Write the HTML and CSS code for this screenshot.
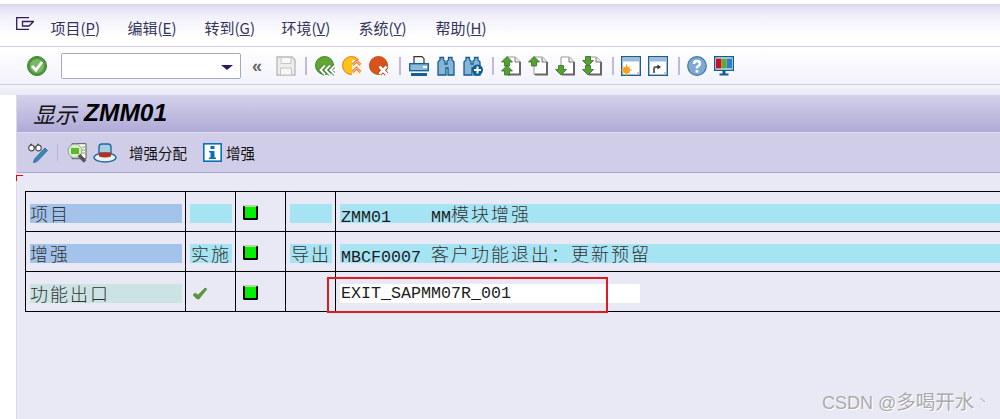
FILE: index.html
```html
<!DOCTYPE html>
<html lang="zh">
<head>
<meta charset="utf-8">
<title>显示 ZMM01</title>
<link rel="stylesheet" href="styles.css">
</head>
<body>
<svg class="defs" width="0" height="0">
  <defs>
    <g id="page"><path d="M6 1h8.500L19 5.500V18.500H6z" fill="#fff" stroke="#999" stroke-width="1"/><path d="M19 6v12.500H7" fill="none" stroke="#666" stroke-width="2"/><path d="M14 1.500v4.500h5" fill="#eee" stroke="#777" stroke-width="1"/></g>
    <path id="up" d="M6 .5l5.500 5.500H8.500v4h-5V6H.5z" fill="#55a02f" stroke="#2f6f2a" stroke-width=".8"/>
    <path id="down" d="M3.500 .5h5v4h3L6 10 .5 4.500h3z" fill="#55a02f" stroke="#2f6f2a" stroke-width=".8"/>
    <g id="bino"><path d="M3 1.500h3.500v2.500l1.500 1v3h2V5l1.500-1V1.500H15V4l2 2v13h-6v-7H9v7H1V6l2-2z" fill="#8ab4d6" stroke="#0e5f92" stroke-width="1.300"/></g>
    <g id="win"><rect x=".7" y=".7" width="18.600" height="18.600" fill="#fff" stroke="#1b5f8c" stroke-width="1.400"/><rect x="1.500" y="1.500" width="17" height="4" fill="#9dbbdd"/><rect x="16" y="16" width="2" height="2" fill="#ccc"/></g>
  </defs>
</svg>
<header class="menubar">
  <svg class="menu-icon" width="18" height="14" viewBox="0 0 18 14"><path d="M13 .7H.7V12.300H13M6.500 4.500H17.500L13 9H6.500z" fill="none" stroke="#2b1c66" stroke-width="1.300"/></svg>
  <nav class="menus">
    <span>项目(<u>P</u>)</span><span>编辑(<u>E</u>)</span><span>转到(<u>G</u>)</span><span>环境(<u>V</u>)</span><span>系统(<u>Y</u>)</span><span>帮助(<u>H</u>)</span>
  </nav>
</header>
<div class="toolbar">
  <svg class="ic ok" width="20" height="20" viewBox="0 0 20 20"><circle cx="10" cy="10" r="9.500" fill="#4c9a3c" stroke="#3b7d30"/><circle cx="10" cy="10" r="7" fill="#7bb865"/><path d="M5 10l4 4 6-8" fill="none" stroke="#fff" stroke-width="2.800"/></svg>
  <div class="combo"><span class="arrow"></span></div>
  <span class="chev">«</span>
  <svg class="ic save" width="20" height="20" viewBox="0 0 20 20"><path d="M1 1h15l3 3v15H1z" fill="#eee" stroke="#bbb" stroke-width="1.400"/><path d="M5 1.500h10v6H5zM4.500 12h11v7h-11z" fill="#f8f8f8" stroke="#c4c4c4"/></svg>
  <i class="sep s-a"></i>
  <svg class="ic back" width="20" height="20" viewBox="0 0 20 20"><circle cx="9.500" cy="9.500" r="9" fill="#5fa632" stroke="#3e7f34"/><path d="M10 9.500l-4.500 4.500 4.500 4.500M15 9.500l-4.500 4.500 4.500 4.500M20 9.500l-4.500 4.500 4.500 4.500" fill="none" stroke="#3e7f34" stroke-width="3.600"/><path d="M10 9.500l-4.500 4.500 4.500 4.500M15 9.500l-4.500 4.500 4.500 4.500M20 9.500l-4.500 4.500 4.500 4.500" fill="none" stroke="#fff" stroke-width="2"/></svg>
  <svg class="ic" width="20" height="20" viewBox="0 0 20 20"><circle cx="9.500" cy="9.500" r="9" fill="#fcc419" stroke="#e8741e"/><path d="M10 4h10v16H10z" fill="#fff3e6"/><path d="M10.500 9l4-4 4 4M10.500 16l4-4 4 4" fill="none" stroke="#e8741e" stroke-width="2.600"/><path d="M10.500 9l4-4 4 4M10.500 16l4-4 4 4" fill="none" stroke="#fff" stroke-width=".8"/></svg>
  <svg class="ic" width="20" height="20" viewBox="0 0 20 20"><circle cx="9.500" cy="9.500" r="9" fill="#d9541a" stroke="#c04a16"/><path d="M10.500 10.500l7 7.500m0-7.500l-7 7.500" stroke="#b03a14" stroke-width="4.400"/><path d="M10.500 10.500l7 7.500m0-7.500l-7 7.500" stroke="#fff" stroke-width="2.800"/></svg>
  <i class="sep s-b"></i>
  <svg class="ic print" width="20" height="20" viewBox="0 0 20 20"><path d="M5 .7h8l2 2v5H5z" fill="#fff" stroke="#333" stroke-width="1.200"/><rect x=".7" y="7.700" width="18.600" height="7" fill="#8eb9d9" stroke="#0e5f92" stroke-width="1.300"/><rect x="14" y="10" width="4" height="2" fill="#fff"/><rect x="2" y="17" width="16" height="3" fill="#0e5f92"/></svg>
  <svg class="ic" width="20" height="20" viewBox="0 0 20 20"><use href="#bino" x="1"/></svg>
  <svg class="ic" width="20" height="20" viewBox="0 0 20 20"><use href="#bino"/><circle cx="14.500" cy="14" r="5.500" fill="#0e5f92"/><path d="M14.500 10.500v7M11 14h7" stroke="#fff" stroke-width="2"/></svg>
  <i class="sep s-c"></i>
  <svg class="ic" width="20" height="20" viewBox="0 0 20 20"><use href="#page"/><use href="#up" x="0" y="0"/><use href="#up" x="0" y="9"/></svg>
  <svg class="ic" width="20" height="20" viewBox="0 0 20 20"><use href="#page"/><use href="#up" x="0" y="0"/></svg>
  <svg class="ic" width="20" height="20" viewBox="0 0 20 20"><use href="#page"/><use href="#down" x="0" y="9"/></svg>
  <svg class="ic" width="20" height="20" viewBox="0 0 20 20"><use href="#page"/><use href="#down" x="0" y="0"/><use href="#down" x="0" y="9"/></svg>
  <i class="sep s-d"></i>
  <svg class="ic" width="20" height="20" viewBox="0 0 20 20"><use href="#win"/><circle cx="5.500" cy="14" r="3.500" fill="#f9a01b"/><path d="M5.500 8.500v11M0 14h11M2 10.500l7 7m0-7l-7 7" stroke="#f9a01b"/></svg>
  <svg class="ic" width="20" height="20" viewBox="0 0 20 20"><use href="#win"/><path d="M6 17v-4q0-2 2-2h2" fill="none" stroke="#666" stroke-width="2"/><path d="M9.500 8.500l3.500 2.500-3.500 2.500z" fill="#333"/></svg>
  <i class="sep s-d"></i>
  <svg class="ic" width="20" height="20" viewBox="0 0 20 20"><circle cx="10" cy="10" r="9.300" fill="#7fa9cf" stroke="#3b78a8" stroke-width="1.200"/><path d="M7 8q0-3 3-3t3 2.700q0 1.600-3 3.300v1.500" fill="none" stroke="#fff" stroke-width="2.400"/><rect x="8.700" y="14" width="2.600" height="2.600" fill="#fff"/></svg>
  <svg class="ic" width="20" height="20" viewBox="0 0 20 20"><rect x=".7" y=".7" width="18.600" height="13.600" fill="#fff" stroke="#0e5f92" stroke-width="1.400"/><rect x="2" y="2.500" width="5.500" height="10" fill="#c8102e"/><rect x="7.500" y="2.500" width="5" height="10" fill="#5ea92f"/><rect x="12.500" y="2.500" width="5.500" height="10" fill="#2f7fc4"/><path d="M8.500 14.500h3v3h-3zM5.500 17.500h9v2h-9z" fill="#0e5f92"/></svg>
</div>
<main class="workarea">
  <section class="panel">
    <h1 class="title"><span class="title-cn">显示</span><span class="title-en">ZMM01</span></h1>
    <div class="apptools">
      <svg class="ai a1" width="20" height="20" viewBox="0 0 20 20"><circle cx="3.500" cy="5" r="2.800" fill="#fff" stroke="#555" stroke-width="1.200"/><circle cx="10.500" cy="5" r="2.800" fill="#fff" stroke="#555" stroke-width="1.200"/><path d="M5.500 4h3M2 1.500h2M9 1.500h2" stroke="#555" stroke-width="1.300"/><path d="M17 5l2.500 2.500L9 18.500l-3.500 1 1-3.500z" fill="#3d87bd" stroke="#20608f" stroke-width=".8"/></svg>
      <i class="a-sep"></i>
      <svg class="ai a2" width="20" height="20" viewBox="0 0 20 20"><path d="M5 .7h14v15H5z" fill="#fff" stroke="#555"/><path d="M15 4h3M15 7h3M15 10h3" stroke="#5db82c"/><circle cx="8" cy="8" r="7" fill="#d8eec8" stroke="#999"/><rect x="4" y="5" width="8" height="6" fill="#5db82c"/><path d="M12 12l6 6.500" stroke="#555" stroke-width="3.500"/></svg>
      <svg class="ai a3" width="24" height="20" viewBox="0 0 24 20"><path d="M6 12V4q0-3 3-3h6q3 0 3 3v8z" fill="#a8cbe6" stroke="#1c6a9d" stroke-width="1.400"/><ellipse cx="12" cy="14.500" rx="11" ry="4.500" fill="#e8f2fa" stroke="#1c6a9d" stroke-width="1.400"/><path d="M6 9.500h12v4q-6 2-12 0z" fill="#b5301c"/></svg>
      <span class="at-text t1">增强分配</span>
      <svg class="ai info" width="19" height="19" viewBox="0 0 19 19"><rect x=".8" y=".8" width="17.400" height="17.400" fill="#fff" stroke="#0a70b5" stroke-width="1.600"/><rect x="7.500" y="3" width="4" height="3" fill="#0a70b5"/><path d="M6 8h5.500v6.500H13V16H6v-1.500h1.500V9.500H6z" fill="#0a70b5"/></svg>
      <span class="at-text t2">增强</span>
    </div>
    <div class="content">
      <i class="corner"></i>
      <div class="grid">
        <div class="cell"><span class="bar blue"><b>项目</b></span></div>
        <div class="cell"><span class="bar cyan"></span></div>
        <div class="cell"><i class="led"></i></div>
        <div class="cell"><span class="bar cyan"></span></div>
        <div class="cell last"><span class="bar cyan txt">ZMM01    MM<b>模块增强</b></span></div>

        <div class="cell"><span class="bar blue"><b>增强</b></span></div>
        <div class="cell"><span class="bar cyan txt"><b>实施</b></span></div>
        <div class="cell"><i class="led"></i></div>
        <div class="cell"><span class="bar cyan txt"><b>导出</b></span></div>
        <div class="cell last"><span class="bar cyan txt">MBCF0007 <b>客户功能退出&#xFF1A;更新预留</b></span></div>

        <div class="cell"><span class="bar mint"><b>功能出口</b></span></div>
        <div class="cell"><svg class="tick" width="16" height="14" viewBox="0 0 16 14"><path d="M1 8l2-2 3 2 7-7 2 1-8 10H5z" fill="#5b9a3c" stroke="#4a8430" stroke-width=".6"/></svg></div>
        <div class="cell"><i class="led"></i></div>
        <div class="cell"></div>
        <div class="cell last"><span class="bar white txt">EXIT_SAPMM07R_001</span></div>
      </div>
      <i class="redbox"></i>
    </div>
  </section>
</main>
<div class="watermark">CSDN @<span>多喝开水</span><span class="dot">丶</span></div>
</body>
</html>
```
FILE: styles.css
```css
* { box-sizing: border-box; }
html, body { margin: 0; padding: 0; }
body { width: 1000px; height: 419px; overflow: hidden; background: #fff; position: relative; font-family: "Noto Sans CJK SC", sans-serif; }
.defs { position: absolute; }
.menubar { height: 43px; margin-top: 4px; display: flex; align-items: flex-start; border-bottom: 1px solid #cfcbe3; background: linear-gradient(#dcd9ef 0, #f1f0fa 12px, #fff 32px); }
.menu-icon { margin: 13px 0 0 16px; }
.menus { display: flex; gap: 27px; margin: 12px 0 0 16.500px; font-size: 15px; line-height: 24px; color: #33335c; }
.menus span { width: 50px; white-space: nowrap; }
.toolbar { height: 38px; display: flex; align-items: center; border-bottom: 1px solid #cfcbe3; background: linear-gradient(#fff, #f2f2fb); }
.ic { flex: none; margin-left: 7px; }
.ok { margin-left: 27px; }
.combo { width: 180px; height: 26px; margin-left: 14px; background: #fff; border: 1px solid #a9a9b5; border-radius: 2px; position: relative; }
.arrow { position: absolute; right: 7px; top: 11px; border: 5px solid transparent; border-top: 5px solid #2d1a66; border-bottom: 0; border-left-width: 6px; border-right-width: 6px; }
.chev { margin-left: 11px; width: 12px; font: bold 18px/20px "Liberation Sans", sans-serif; color: #666; }
.save { margin-left: 12px; }
.sep { flex: none; display: block; width: 2px; height: 18px; background: #bdb9df; }
.s-a { margin-left: 9px; }
.back { margin-left: 8px; }
.s-b { margin-left: 10px; }
.print { margin-left: 8px; }
.s-c { margin-left: 9px; }
.s-d { margin-left: 10px; }
.workarea { height: 334px; padding: 10px 0 0 16px; background: linear-gradient(#f4f4fb, #e9e9f5) top / 100% 10px no-repeat, #fff; }
.panel { border-left: 1px solid #d8d8e8; height: 324px; background: #e9e9f5; }
.title { height: 38px; margin: 0; padding: 0 0 2px 16px; display: flex; align-items: center; gap: 7px; font-size: 22px; line-height: 36px; font-weight: 400; font-style: italic; color: #111; background: linear-gradient(#d4d1ec, #aeaad6); border-bottom: 1px solid #e0dff2; }
.title-en { font: italic bold 24.500px/36px "Liberation Sans", sans-serif; color: #000; }
.apptools { height: 40px; display: flex; align-items: center; background: #cfcde8; border-bottom: 1px solid #aaa7cd; }
.ai { flex: none; }
.a1 { margin-left: 11px; }
.a-sep { display: block; flex: none; margin-left: 9px; width: 1px; height: 17px; background: #b4b1da; }
.a2 { margin-left: 9px; }
.a3 { margin-left: 6px; }
.at-text { font-size: 14.500px; color: #111; white-space: nowrap; }
.t1 { margin-left: 12px; }
.info { margin-left: 16px; }
.t2 { margin-left: 4px; }
.content { position: relative; padding: 18px 0 0 8px; }
.corner { position: absolute; left: -1px; top: 2px; width: 7px; height: 6px; border-left: 1px solid #ee0010; border-top: 1px solid #ee0010; }
.grid { display: grid; grid-template-columns: 160px 50px 50px 50px 1fr; grid-auto-rows: 40px; border-top: 1px solid #000; border-left: 1px solid #000; }
.cell { display: flex; align-items: center; padding: 0 3px 0 4px; border-right: 1px solid #000; border-bottom: 1px solid #000; min-width: 0; }
.cell.last { border-right: 0; padding-right: 0; }
.bar { display: block; flex: 1; height: 19px; margin-top: 4px; font: 16.667px/19px "Liberation Mono", monospace; color: #1c1c1c; white-space: pre; }
.bar b { font: 300 18px/19px "Noto Sans CJK SC", sans-serif; letter-spacing: 2px; color: #333; vertical-align: 1px; }
.blue { background: #a3c3ea; }
.mint { background: #cbe3e3; }
.cyan { background: #a6e4f4; }
.white { background: #fff; flex: none; width: 300px; }
.txt { padding-left: 1px; }
.led { display: block; width: 15px; height: 15px; margin: 2px 0 0 3px; background: #00f000; border: 2px solid #000; border-top-color: #b6d69e; border-radius: 2px; }
.tick { margin: 4px 0 0 2px; }
.redbox { position: absolute; left: 310px; top: 104px; width: 281px; height: 36px; border: 2px solid #e01a22; }
.watermark { position: absolute; left: 822px; top: 389px; font: 18px/22px "Liberation Sans", sans-serif; color: #aaa; text-shadow: 1px 1px 0 #fff; white-space: nowrap; }
.watermark span { font: 19.500px/22px "Noto Sans CJK SC", sans-serif; }
.watermark .dot { font-size: 11px; margin-left: 3px; vertical-align: 4px; }
```
